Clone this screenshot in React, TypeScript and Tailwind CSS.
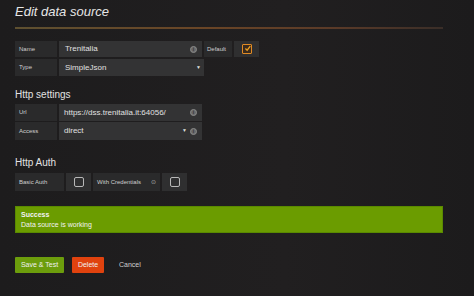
import React from "react";

const font = { fontFamily: '"Liberation Sans", Arial, sans-serif' };

function Info() {
  return (
    <span className="inline-flex h-[7px] w-[7px] items-center justify-center rounded-full border border-[#8a8a8a] bg-[#6a6a6a] text-[5px] font-bold leading-none text-[#333]">
      i
    </span>
  );
}

function Check({ checked }: { checked?: boolean }) {
  return (
    <span
      className={
        checked
          ? "flex h-[10px] w-[10px] items-center justify-center rounded-[1px] border border-[#e08a24] bg-[#3a2a1c]"
          : "flex h-[10px] w-[10px] items-center justify-center rounded-[2px] border border-[#b8b8b8] bg-transparent"
      }
    >
      {checked && (
        <svg width="9" height="9" viewBox="0 0 10 10" className="-mt-[2px] ml-[1px]">
          <path d="M2 5 L4.5 7.5 L9 1.5" stroke="#f0a020" strokeWidth="1.8" fill="none" />
        </svg>
      )}
    </span>
  );
}

export default function App() {
  return (
    <div
      style={font}
      className="h-[296px] w-[474px] overflow-hidden bg-[linear-gradient(90deg,#1d1c1d_0%,#211f20_60%,#1c1b1c_100%)] text-[#d8d8d8]"
    >
      <div className="px-[15px] pt-[3px]">
        <h1 className="text-[13px] italic leading-[18px] text-[#e6e6e6]">Edit data source</h1>
        <div className="mt-[6px] h-[2px] w-[428px] bg-[linear-gradient(90deg,#5e5030_0%,#6a4526_45%,#5a3a28_75%,#3a2e28_100%)]" />

        <div className="mt-[12px] flex flex-col gap-[2px]">
          <div className="flex h-[16px] gap-[2px]">
            <div className="flex w-[42px] items-center bg-[#2a2a2b] pl-[4px] text-[6px] text-[#cfcfcf]">Name</div>
            <div className="flex w-[143px] items-center justify-between bg-[#333334] pl-[6px] pr-[5px] text-[8px] text-[#e0e0e0]">
              <span>Trenitalia</span>
              <Info />
            </div>
            <div className="flex w-[28px] items-center bg-[#2a2a2b] pl-[3px] text-[6px] text-[#cfcfcf]">Default</div>
            <div className="flex w-[25px] items-center justify-center bg-[#2f2f30]">
              <Check checked />
            </div>
          </div>
          <div className="flex h-[17px] gap-[2px]">
            <div className="flex w-[42px] items-center bg-[#2a2a2b] pl-[4px] text-[6px] text-[#cfcfcf]">Type</div>
            <div className="flex w-[145px] items-center justify-between bg-[#333334] pl-[6px] pr-[3px] text-[8px] text-[#e0e0e0]">
              <span>SimpleJson</span>
              <span className="text-[5px] text-[#ddd]">▼</span>
            </div>
          </div>
        </div>

        <h2 className="mt-[13px] text-[10px] leading-[12px] text-[#e2e2e2]">Http settings</h2>
        <div className="mt-[3px] flex flex-col gap-[1px]">
          <div className="flex h-[17px] gap-[2px]">
            <div className="flex w-[42px] items-center bg-[#2a2a2b] pl-[4px] text-[6px] text-[#cfcfcf]">Url</div>
            <div className="flex w-[143px] items-center justify-between bg-[#333334] pl-[5px] pr-[5px] text-[8px] text-[#e0e0e0]">
              <span>https://dss.trenitalia.it:64056/</span>
              <Info />
            </div>
          </div>
          <div className="flex h-[18px] gap-[2px]">
            <div className="flex w-[42px] items-center bg-[#2a2a2b] pl-[4px] text-[6px] text-[#cfcfcf]">Access</div>
            <div className="flex w-[143px] items-center justify-between bg-[#333334] pl-[5px] pr-[5px] text-[8px] text-[#e0e0e0]">
              <span>direct</span>
              <span className="flex items-center gap-[3px]">
                <span className="text-[5px] text-[#ddd]">▼</span>
                <Info />
              </span>
            </div>
          </div>
        </div>

        <h2 className="mt-[17px] text-[10px] leading-[12px] text-[#e2e2e2]">Http Auth</h2>
        <div className="mt-[4px] flex h-[18px] gap-[2px]">
          <div className="flex w-[49px] items-center bg-[#2a2a2b] pl-[4px] text-[6px] text-[#cfcfcf]">Basic Auth</div>
          <div className="flex w-[25px] items-center justify-center bg-[#2f2f30]">
            <Check />
          </div>
          <div className="flex w-[67px] items-center justify-between bg-[#2a2a2b] pl-[4px] pr-[4px] text-[6px] text-[#cfcfcf]">
            <span>With Credentials</span>
            <span className="text-[6px] text-[#aaa]">⊙</span>
          </div>
          <div className="flex w-[25px] items-center justify-center bg-[#2f2f30]">
            <Check />
          </div>
        </div>

        <div className="mt-[15px] flex h-[27px] w-[428px] flex-col justify-center border border-[#5a8a00] bg-[#6b9c00] px-[5px] text-[7px] leading-[10px] text-[#f2f2f2]">
          <span className="font-bold">Success</span>
          <span>Data source is working</span>
        </div>

        <div className="mt-[24px] flex items-center gap-[8px]">
          <button className="h-[16px] w-[49px] rounded-[1px] bg-[#6c9d0c] text-[7px] text-[#f0f0f0]">Save &amp; Test</button>
          <button className="h-[16px] w-[32px] rounded-[1px] bg-[#e0420e] text-[7px] text-[#f0f0f0]">Delete</button>
          <span className="ml-[7px] text-[7px] text-[#cfcfcf]">Cancel</span>
        </div>
      </div>
    </div>
  );
}
